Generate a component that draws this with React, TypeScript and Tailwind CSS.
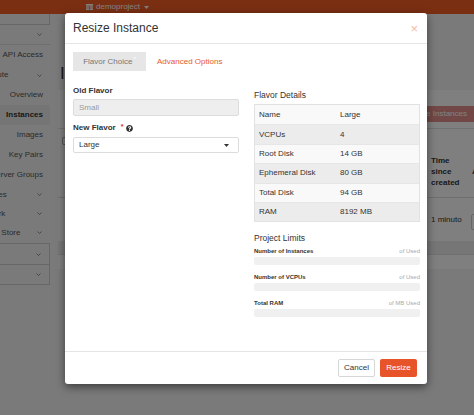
import { FaQuestionCircle } from "react-icons/fa"

function Chevron() {
  return (
    <svg width="5" height="3" viewBox="0 0 5 3" className="shrink-0">
      <path d="M0.5 0.5 L2.5 2.5 L4.5 0.5" fill="none" stroke="#777" strokeWidth="0.8" />
    </svg>
  )
}

function Caret({ color = "#333" }: { color?: string }) {
  return (
    <svg width="5" height="3" viewBox="0 0 5 3" className="shrink-0">
      <path d="M0 0 L5 0 L2.5 3 Z" fill={color} />
    </svg>
  )
}

const flavorRows = [
  ["Name", "Large"],
  ["VCPUs", "4"],
  ["Root Disk", "14 GB"],
  ["Ephemeral Disk", "80 GB"],
  ["Total Disk", "94 GB"],
  ["RAM", "8192 MB"],
]

const limits = [
  { label: "Number of Instances", used: "of Used" },
  { label: "Number of VCPUs", used: "of Used" },
  { label: "Total RAM", used: "of MB Used" },
]

type NavItem = { label: string; group?: boolean; active?: boolean; h: string }

const nav: NavItem[] = [
  { label: "API Access", h: "h-[20px]" },
  { label: "Compute", group: true, h: "h-[20px]" },
  { label: "Overview", h: "h-[20px]" },
  { label: "Instances", active: true, h: "h-[20px]" },
  { label: "Images", h: "h-[20px]" },
  { label: "Key Pairs", h: "h-[20px]" },
  { label: "Server Groups", h: "h-[20px]" },
  { label: "Volumes", group: true, h: "h-[19px]" },
  { label: "Network", group: true, h: "h-[19px]" },
  { label: "Object Store", group: true, h: "h-[19px]" },
]

export default function App() {
  return (
    <div className="relative h-[415px] w-[474px] overflow-hidden bg-[#f5f5f5] font-['Liberation_Sans',Arial,sans-serif] text-[#333]">
      {/* Top bar */}
      <div className="flex h-[14px] items-center bg-[#f45c24] pl-[86px] text-[8px] text-white">
        <svg width="7" height="6" viewBox="0 0 7 6" className="mr-[3px]">
          <rect x="0" y="0" width="7" height="6" fill="#fff" />
          <path d="M0 2 H7 M0 4 H7 M3.5 2 V6" stroke="#f45c24" strokeWidth="0.6" />
        </svg>
        <span>demoproject</span>
        <span className="ml-[4px]"><Caret color="#fff" /></span>
      </div>

      {/* Page, scrolled sideways */}
      <div className="ml-[-80px] flex">
        <aside className="w-[130px] shrink-0 text-[8px] text-[#555]">
          <div className="h-[11px] border-b border-r border-[#cfcfcf]" />
          <div className="flex h-[20px] items-center justify-between border-b border-[#dcdcdc] pl-[40px] pr-[8px]">
            <span>Project</span>
            <Chevron />
          </div>
          {nav.map((item) =>
            item.group ? (
              <div key={item.label} className={`flex ${item.h} items-center justify-between pl-[56px] pr-[8px]`}>
                <span>{item.label}</span>
                <Chevron />
              </div>
            ) : (
              <div
                key={item.label}
                className={`flex ${item.h} items-center justify-end whitespace-nowrap pr-[7px] ${item.active ? "bg-[#ebebeb] font-bold text-[#333]" : ""}`}
              >
                {item.label}
              </div>
            )
          )}
          <div className="mt-[1px] border border-[#cfcfcf]">
            <div className="flex h-[20px] items-center justify-between pl-[40px] pr-[8px]">
              <span>Admin</span>
              <Chevron />
            </div>
            <div className="flex h-[20px] items-center justify-between border-t border-[#cfcfcf] pl-[40px] pr-[8px]">
              <span>Identity</span>
              <Chevron />
            </div>
          </div>
        </aside>

        <main className="w-[424px] shrink-0 pl-[8px]">
          <h1 className="mt-[50px] pl-[2px] text-[17px] leading-[20px]">Instances</h1>
          <div className="mt-[6px] w-[460px] bg-white pb-[14px] pt-[16px]">
            <div className="flex h-[16px] w-[416px] justify-end">
              <button className="flex items-center rounded-l-[2px] bg-[#e5918c] pl-[8px] pr-[7px] text-[8px] text-white">
                Delete Instances
              </button>
            </div>
            <div className="mt-[6px] border-y border-[#e0e0e0] text-[8px]">
              <div className="flex h-[69px] border-b border-[#dcdcdc] font-bold leading-[11px]">
                <div className="w-[368px] pl-[4px] pt-[8px]">
                  <span className="inline-block h-[8px] w-[8px] rounded-[2px] border border-[#aaa] bg-white" />
                </div>
                <div className="w-[45px] self-end pb-[9px] pl-[5px]">
                  Time
                  <br />
                  since
                  <br />
                  created
                </div>
                <div className="flex-1 self-end pb-[20px] pl-[1px]">Actions</div>
              </div>
              <div className="flex h-[43px] items-center">
                <div className="w-[368px]" />
                <div className="w-[45px] pl-[5px]">1 minuto</div>
                <div className="flex-1">
                  <span className="inline-flex h-[16px] items-center rounded-[2px] border border-[#ccc] bg-white px-[5px]">
                    Create Snapshot
                  </span>
                </div>
              </div>
              <div className="flex h-[13px] items-center bg-[#ececec] pl-[420px] text-[7px] text-[#777]">
                Displaying 1 item
              </div>
            </div>
          </div>
        </main>
      </div>

      {/* Backdrop */}
      <div className="absolute inset-0 bg-black/50" />

      {/* Modal */}
      <div className="absolute left-[65px] top-[13px] flex h-[371px] w-[362px] flex-col rounded-[3px] bg-white shadow-[0_3px_9px_rgba(0,0,0,0.5)]">
        <div className="flex h-[31px] items-center justify-between border-b border-[#e5e5e5] pl-[8px] pr-[9px]">
          <h2 className="text-[12px] leading-none text-[#333]">Resize Instance</h2>
          <span className="text-[13px] leading-none text-[#f3bba8]">×</span>
        </div>

        <div className="flex-1 pl-[8px] pr-[7px] pt-[8px]">
          <div className="flex h-[19px] items-center text-[8px]">
            <div className="flex h-full w-[73px] items-center justify-center bg-[#e6e6e6] text-[#777]">
              Flavor Choice
              <span className="ml-[1px] self-start pt-[3px] text-[6px] text-white">*</span>
            </div>
            <div className="pl-[11px] text-[#e65a2e]">Advanced Options</div>
          </div>

          <div className="mt-[15px] grid grid-cols-2 gap-[15px]">
            {/* Left column */}
            <div>
              <label className="block text-[8px] font-bold leading-[10px]">Old Flavor</label>
              <div className="mt-[3px] flex h-[17px] items-center rounded-[2px] border border-[#dcdcdc] bg-[#eeeeee] pl-[5px] text-[8px] text-[#999]">
                Small
              </div>
              <div className="mt-[7px] flex items-center text-[8px] font-bold leading-[10px]">
                New Flavor
                <span className="ml-[5px] self-start text-[7px] leading-[7px] text-[#e0302a]">*</span>
                <FaQuestionCircle className="ml-[3px] text-[#333]" size={7} />
              </div>
              <div className="mt-[4px] flex h-[16px] items-center justify-between rounded-[2px] border border-[#dcdcdc] bg-white pl-[5px] pr-[9px] text-[8px]">
                <span>Large</span>
                <Caret />
              </div>
            </div>

            {/* Right column */}
            <div>
              <h3 className="mt-[4px] text-[8.5px] leading-[11px]">Flavor Details</h3>
              <div className="mt-[3px] border border-[#e2e2e2] text-[8px]">
                {flavorRows.map(([k, v], i) => (
                  <div
                    key={k}
                    className={`grid h-[19.4px] grid-cols-[85px_1fr] items-center ${i > 0 ? "border-t border-[#e6e6e6]" : ""} ${i % 2 === 1 ? "bg-[#ececec]" : "bg-[#f9f9f9]"}`}
                  >
                    <span className="pl-[4px]">{k}</span>
                    <span>{v}</span>
                  </div>
                ))}
              </div>

              <h3 className="mt-[11px] text-[8.5px] leading-[11px]">Project Limits</h3>
              <div className="mt-[3px] flex flex-col gap-[8px]">
                {limits.map(({ label, used }) => (
                  <div key={label}>
                    <div className="flex h-[8px] items-center justify-between text-[6px] leading-[8px]">
                      <span className="font-bold">{label}</span>
                      <span className="text-[#aaa]">{used}</span>
                    </div>
                    <div className="mt-[2px] h-[8px] rounded-[2px] bg-[#f0f0f0]" />
                  </div>
                ))}
              </div>
            </div>
          </div>
        </div>

        <div className="flex h-[33px] items-center justify-end gap-[5px] border-t border-[#e5e5e5] pr-[10px] text-[8px]">
          <button className="h-[18px] w-[37px] rounded-[2px] border border-[#d6d6d6] bg-white text-[#333]">Cancel</button>
          <button className="h-[18px] w-[37px] rounded-[2px] bg-[#e8542a] text-white">Resize</button>
        </div>
      </div>
    </div>
  )
}
